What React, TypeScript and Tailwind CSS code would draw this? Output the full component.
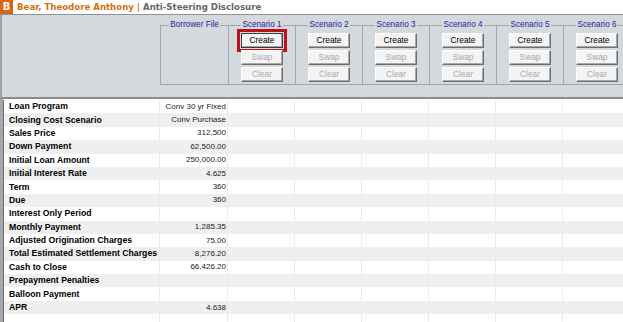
import React from "react";

const rows: [string, string][] = [
  ["Loan Program", "Conv 30 yr Fixed"],
  ["Closing Cost Scenario", "Conv Purchase"],
  ["Sales Price", "312,500"],
  ["Down Payment", "62,500.00"],
  ["Initial Loan Amount", "250,000.00"],
  ["Initial Interest Rate", "4.625"],
  ["Term", "360"],
  ["Due", "360"],
  ["Interest Only Period", ""],
  ["Monthly Payment", "1,285.35"],
  ["Adjusted Origination Charges", "75.00"],
  ["Total Estimated Settlement Charges", "8,276.20"],
  ["Cash to Close", "66,426.20"],
  ["Prepayment Penalties", ""],
  ["Balloon Payment", ""],
  ["APR", "4.638"],
  ["", ""],
];

function Btn({ label, disabled, highlight }: { label: string; disabled?: boolean; highlight?: boolean }) {
  return (
    <div
      className={`w-[42px] h-[15px] flex items-center justify-center bg-[#f4f4f4] border text-[8.3px] leading-none shadow-[inset_-1px_-1px_0_#a8a8a8] ${
        highlight
          ? "border-[#3a3a3a] outline-3 outline-offset-[1px] outline-[#bb1119]"
          : "border-t-white border-l-white border-r-[#6e6e6e] border-b-[#6e6e6e]"
      } ${disabled ? "text-[#a9a9a9]" : "text-black"}`}
    >
      {label}
    </div>
  );
}

function Group({ title, w, children }: { title: string; w: string; children?: React.ReactNode }) {
  return (
    <fieldset className={`${w} h-[65px] shrink-0 border-t border-b border-l border-[#a3a7ab] flex flex-col items-center pt-[3px] gap-[2px]`}>
      <legend className="mx-auto px-[1px] text-[8.2px] leading-[10px] text-[#24249a]">{title}</legend>
      {children}
    </fieldset>
  );
}

export default function App() {
  return (
    <div className="w-[623px] h-[322px] overflow-hidden bg-white flex flex-col font-['Liberation_Sans',Arial,sans-serif]">
      <div className="h-[14px] shrink-0 flex items-center">
        <div className="w-[13px] h-[14px] bg-[#d8660f] flex items-center justify-center">
          <span className="text-white font-bold text-[10px] leading-none font-['DejaVu_Sans',sans-serif]">B</span>
        </div>
        <div className="ml-[4px] font-['DejaVu_Sans',Verdana,sans-serif] font-bold text-[8.6px] leading-none whitespace-nowrap">
          <span className="text-[#d2700f]">Bear, Theodore Anthony | </span>
          <span className="text-[#666666]">Anti-Steering Disclosure</span>
        </div>
      </div>
      <div className="h-[85px] shrink-0 bg-[#d4d9de] border-t border-t-[#8e9296] border-l-2 border-l-[#9ea2a6] border-b-2 border-b-[#8a8a8a] pt-[5px] flex">
        <div className="w-[158px] shrink-0" />
        <Group title="Borrower File" w="w-[68px]" />
        {[1, 2, 3, 4, 5, 6].map((n) => (
          <Group key={n} title={`Scenario ${n}`} w="w-[67px]">
            <Btn label="Create" highlight={n === 1} />
            <Btn label="Swap" disabled />
            <Btn label="Clear" disabled />
          </Group>
        ))}
      </div>
      <div className="flex-1 border-l-[3px] border-l-[#a4a8ac] pt-[1px]">
        <div className="border-l border-l-[#6f6f6f]">
          {rows.map(([label, val], i) => (
            <div
              key={i}
              className={`h-[13.4px] flex items-center ${i % 2 === 0 ? "bg-white" : "bg-[#efefef]"}`}
            >
              <div className="w-[156px] h-full shrink-0 flex items-center pl-[5px] border-r border-r-[#ececec] text-[8.7px] font-bold text-black whitespace-nowrap">
                {label}
              </div>
              <div className="w-[68px] h-full shrink-0 flex items-center justify-end pr-[1px] border-r border-r-[#ececec] text-[8px] text-[#1a1a1a] whitespace-nowrap">
                {val}
              </div>
              {[0, 1, 2, 3, 4].map((c) => (
                <div key={c} className="w-[67px] h-full shrink-0 border-r border-r-[#ececec]" />
              ))}
              <div className="flex-1 h-full" />
            </div>
          ))}
        </div>
      </div>
    </div>
  );
}
